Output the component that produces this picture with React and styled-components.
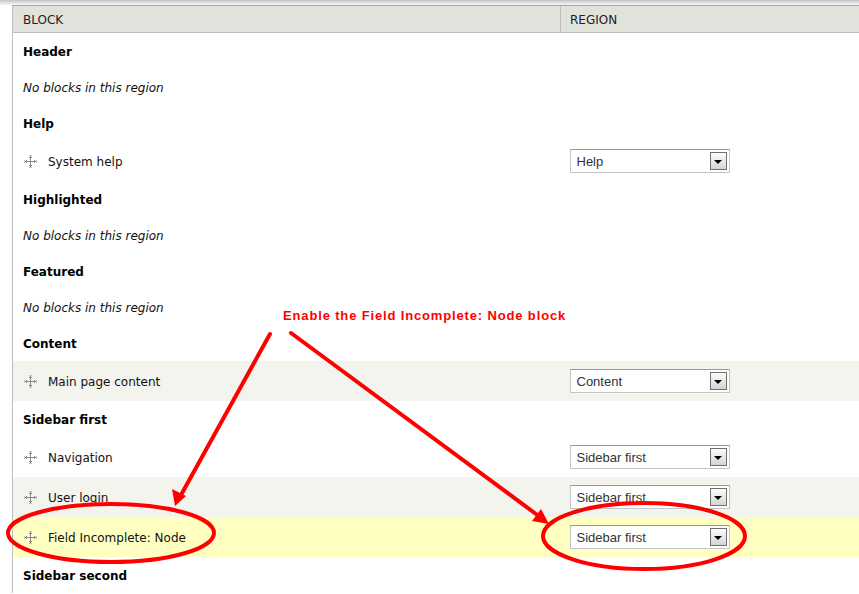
import React from "react";
import styled, { createGlobalStyle } from "styled-components";

const Global = createGlobalStyle`
  html, body { margin: 0; padding: 0; background: #fff; overflow: hidden; }
  body { font-family: "DejaVu Sans", Verdana, sans-serif; }
`;

const Page = styled.div`
  position: relative;
  width: 859px;
  height: 594px;
  overflow: hidden;
  background: linear-gradient(#c4c4c4 0px, #e4e4e4 3px, #fff 6px);
  padding: 5px 0 0 12px;
  box-sizing: border-box;
`;

const Table = styled.table`
  width: 900px;
  border-collapse: collapse;
  border-left: 1px solid #bebfb9;
  font-size: 12px;
  color: #222;
`;

const Th = styled.th`
  background: #e1e2dc;
  border-top: 1px solid #a6a7a2;
  border-bottom: 1px solid #bebfb9;
  border-left: ${(p) => (p.$divider ? "1px solid #bebfb9" : "none")};
  height: 24px;
  padding: 2px 0 0 ${(p) => (p.$divider ? "9px" : "10px")};
  text-align: left;
  font-weight: normal;
  font-size: 12px;
  color: #222;
  width: ${(p) => p.$w || "auto"};
`;

const Tr = styled.tr`
  background: ${(p) =>
    p.$tone === "even" ? "#f3f4ee" : p.$tone === "hl" ? "#ffffc2" : "#fff"};
`;

const Td = styled.td`
  height: ${(p) => (p.$tall ? "40px" : "36px")};
  padding: 0 0 0 ${(p) => (p.$pl || "10px")};
  vertical-align: middle;
`;

const RegionTitle = styled.span`
  display: block;
  padding-top: 2px;
  font-weight: bold;
  font-size: 12px;
  color: #000;
`;

const Empty = styled.span`
  display: block;
  padding-top: 2px;
  font-style: italic;
  font-size: 12px;
  color: #111;
`;

const BlockCell = styled.div`
  display: flex;
  align-items: center;
  gap: 11px;
  padding: 2px 0 0 1px;
  color: #111;
`;

const Handle = styled.svg`
  width: 13px;
  height: 13px;
  flex: none;
  margin-top: -1px;
`;

const SelectBox = styled.div`
  width: 160px;
  height: 24px;
  box-sizing: border-box;
  border: 1px solid #c4c4c4;
  border-top-color: #9a9a9a;
  background: #fff;
  display: flex;
  align-items: center;
  justify-content: space-between;
  padding: 0 2px 0 6px;
  font-family: "Liberation Sans", Arial, sans-serif;
  font-size: 13px;
  color: #333;
`;

const ArrowBtn = styled.span`
  width: 17px;
  height: 18px;
  box-sizing: border-box;
  border: 1px solid #707070;
  background: linear-gradient(#fdfdfd, #d4d4d4);
  display: flex;
  align-items: center;
  justify-content: center;
  &::after {
    content: "";
    border-left: 4px solid transparent;
    border-right: 4px solid transparent;
    border-top: 4px solid #000;
    margin-top: 2px;
  }
`;

const Overlay = styled.svg`
  position: absolute;
  left: 0;
  top: 0;
  width: 859px;
  height: 594px;
  pointer-events: none;
`;

const Note = styled.div`
  position: absolute;
  left: 283px;
  top: 308px;
  font-family: "Liberation Sans", Arial, sans-serif;
  font-weight: bold;
  font-size: 13px;
  letter-spacing: 0.85px;
  color: #ff0000;
  white-space: nowrap;
`;

const DragIcon = () => (
  <Handle viewBox="0 0 13 13">
    <g fill="#8a8a8a">
      <rect x="6" y="1" width="1" height="11" />
      <rect x="1" y="6" width="11" height="1" />
      <rect x="5" y="2" width="3" height="1" />
      <rect x="5" y="10" width="3" height="1" />
      <rect x="2" y="5" width="1" height="3" />
      <rect x="10" y="5" width="1" height="3" />
    </g>
    <g fill="#c4c4c4">
      <rect x="5" y="0" width="3" height="1" />
      <rect x="5" y="12" width="3" height="1" />
      <rect x="0" y="5" width="1" height="3" />
      <rect x="12" y="5" width="1" height="3" />
    </g>
  </Handle>
);

const Select = ({ value }) => (
  <SelectBox>
    <span>{value}</span>
    <ArrowBtn />
  </SelectBox>
);

const rows = [
  { type: "region", label: "Header" },
  { type: "empty" },
  { type: "region", label: "Help" },
  { type: "block", label: "System help", region: "Help" },
  { type: "region", label: "Highlighted" },
  { type: "empty" },
  { type: "region", label: "Featured" },
  { type: "empty" },
  { type: "region", label: "Content" },
  { type: "block", label: "Main page content", region: "Content", tone: "even" },
  { type: "region", label: "Sidebar first" },
  { type: "block", label: "Navigation", region: "Sidebar first" },
  { type: "block", label: "User login", region: "Sidebar first", tone: "even" },
  { type: "block", label: "Field Incomplete: Node", region: "Sidebar first", tone: "hl" },
  { type: "region", label: "Sidebar second" },
];

export default function App() {
  return (
    <>
      <Global />
      <Page>
        <Table>
          <thead>
            <tr>
              <Th $w="537px">BLOCK</Th>
              <Th $divider>REGION</Th>
            </tr>
          </thead>
          <tbody>
            {rows.map((r, i) => {
              if (r.type === "region")
                return (
                  <Tr key={i}>
                    <Td colSpan={2}>
                      <RegionTitle>{r.label}</RegionTitle>
                    </Td>
                  </Tr>
                );
              if (r.type === "empty")
                return (
                  <Tr key={i}>
                    <Td colSpan={2}>
                      <Empty>No blocks in this region</Empty>
                    </Td>
                  </Tr>
                );
              return (
                <Tr key={i} $tone={r.tone}>
                  <Td $tall>
                    <BlockCell>
                      <DragIcon />
                      <span>{r.label}</span>
                    </BlockCell>
                  </Td>
                  <Td $tall $pl="9px">
                    <Select value={r.region} />
                  </Td>
                </Tr>
              );
            })}
          </tbody>
        </Table>
        <Overlay viewBox="0 0 859 594">
          <g stroke="#ff0000" strokeWidth="4" fill="none" strokeLinecap="round">
            <line x1="270" y1="334" x2="181" y2="495" />
            <line x1="291" y1="333" x2="540" y2="517" />
            <ellipse cx="111" cy="533" rx="103" ry="29" />
            <ellipse cx="644" cy="536" rx="101" ry="33" />
          </g>
          <g fill="#ff0000">
            <polygon points="175,506 172,489 186,496" />
            <polygon points="549,524 532,521 541,509" />
          </g>
        </Overlay>
        <Note>Enable the Field Incomplete: Node block</Note>
      </Page>
    </>
  );
}
